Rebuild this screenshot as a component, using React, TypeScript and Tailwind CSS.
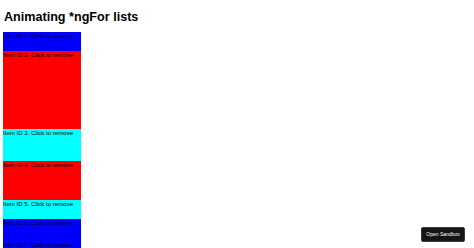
import React from 'react';

const items = [
  { id: 1, color: 'bg-[#0000ff]', h: 'h-[19px]' },
  { id: 2, color: 'bg-[#ff0000]', h: 'h-[78px]' },
  { id: 3, color: 'bg-[#00ffff]', h: 'h-[32px]' },
  { id: 4, color: 'bg-[#ff0000]', h: 'h-[39px]' },
  { id: 5, color: 'bg-[#00ffff]', h: 'h-[19px]' },
  { id: 6, color: 'bg-[#0000ff]', h: 'h-[22px]' },
  { id: 7, color: 'bg-[#0000ff]', h: 'h-[20px]' },
];

const App: React.FC = () => {
  return (
    <div className="min-h-screen bg-white px-[3px] font-['Liberation_Sans',Arial,sans-serif] text-black">
      <h1 className="pt-[10px] pb-[7px] pl-[1px] text-[12.6px] font-bold leading-[15px]">Animating *ngFor lists</h1>

      <ul className="w-[78px]">
        {items.map((item) => (
          <li key={item.id} className={`${item.color} ${item.h} cursor-pointer text-[6.1px] leading-[7px]`}>
            Item ID {item.id}. Click to remove
          </li>
        ))}
      </ul>

      <button className="fixed right-[9px] bottom-[6px] flex h-[15px] w-[44px] items-center justify-center rounded-[2px] border border-[#3a3a3a] bg-[#151515] text-[5px] text-white">
        Open Sandbox
      </button>
    </div>
  );
};

export default App;
